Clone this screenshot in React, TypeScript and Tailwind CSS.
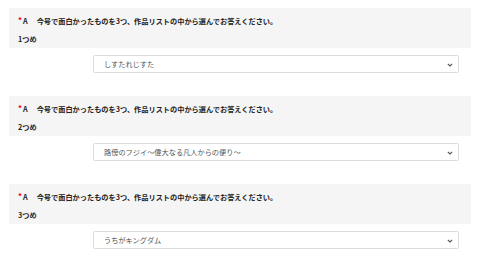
import React from 'react';

const answers = ['しすたれじすた', '路傍のフジイ〜偉大なる凡人からの便り〜', 'うちがキングダム'];

function Chevron() {
  return (
    <svg width="6" height="4" viewBox="0 0 6 4" className="absolute right-[5px] top-[7px] pointer-events-none">
      <path d="M0.8 0.8 L3 3 L5.2 0.8" fill="none" stroke="#555" strokeWidth="1.1" />
    </svg>
  );
}

function Question({ index, value }: { index: number; value: string }) {
  return (
    <div className="mb-[23px]">
      <div className="h-[40px] bg-[#f5f5f5] pl-[9px] pt-[8px] text-[7.2px] font-bold text-[#222] leading-[10px]">
        <div className="flex items-start">
          <span className="text-[#e60012] text-[8px] leading-[8px] mr-[1px]">*</span>
          <span>A</span>
          <span className="ml-[9px]">今号で面白かったものを3つ、作品リストの中から選んでお答えください。</span>
        </div>
        <div className="mt-[8px]">{index}つめ</div>
      </div>
      <div className="mt-[7px] ml-[84px] w-[366px] h-[18px] relative border border-[#dcdcdc] rounded-[2px] bg-white">
        <div className="pl-[10px] text-[7.2px] leading-[16px] text-[#555]">{value}</div>
        <Chevron />
      </div>
    </div>
  );
}

export default function App() {
  return (
    <div className="w-[480px] h-[266px] bg-white pt-[8px] px-[9px] overflow-hidden" style={{ fontFamily: '"Noto Sans CJK JP", "Noto Sans", sans-serif' }}>
      {answers.map((a, i) => (
        <Question key={i} index={i + 1} value={a} />
      ))}
    </div>
  );
}
